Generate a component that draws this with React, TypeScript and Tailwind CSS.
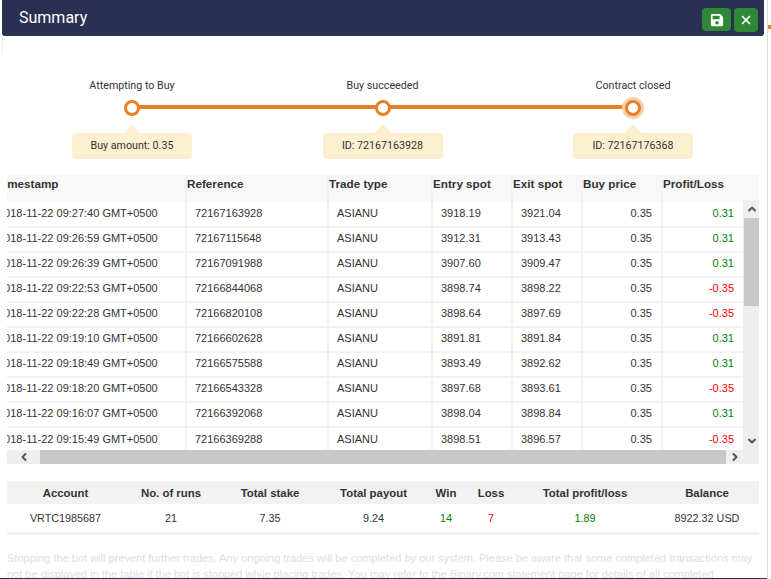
import { FaSave } from "react-icons/fa";
import { X, ChevronUp, ChevronDown, ChevronLeft, ChevronRight } from "lucide-react";

const rows = [
  ["2018-11-22 09:27:40 GMT+0500", "72167163928", "3918.19", "3921.04", "0.31"],
  ["2018-11-22 09:26:59 GMT+0500", "72167115648", "3912.31", "3913.43", "0.31"],
  ["2018-11-22 09:26:39 GMT+0500", "72167091988", "3907.60", "3909.47", "0.31"],
  ["2018-11-22 09:22:53 GMT+0500", "72166844068", "3898.74", "3898.22", "-0.35"],
  ["2018-11-22 09:22:28 GMT+0500", "72166820108", "3898.64", "3897.69", "-0.35"],
  ["2018-11-22 09:19:10 GMT+0500", "72166602628", "3891.81", "3891.84", "0.31"],
  ["2018-11-22 09:18:49 GMT+0500", "72166575588", "3893.49", "3892.62", "0.31"],
  ["2018-11-22 09:18:20 GMT+0500", "72166543328", "3897.68", "3893.61", "-0.35"],
  ["2018-11-22 09:16:07 GMT+0500", "72166392068", "3898.04", "3898.84", "0.31"],
  ["2018-11-22 09:15:49 GMT+0500", "72166369288", "3898.51", "3896.57", "-0.35"],
];

const steps = [
  { title: "Attempting to Buy", info: "Buy amount: 0.35" },
  { title: "Buy succeeded", info: "ID: 72167163928" },
  { title: "Contract closed", info: "ID: 72167176368", active: true },
];

function Step({ title, info, active }: { title: string; info: string; active?: boolean }) {
  return (
    <div className="flex w-[120px] flex-col items-center">
      <div className="h-[15px] text-[10.7px] leading-[15px] text-[#333]">{title}</div>
      <div className={`mt-[7px] box-content h-[10px] w-[10px] rounded-full border-[3px] border-[#e98024] bg-white ${active ? "shadow-[0_0_0_3px_#f5cfae]" : ""}`} />
      <div className="mt-[8px] h-0 w-0 border-x-[8px] border-b-[9px] border-x-transparent border-b-[#fdf0d0]" />
      <div className="flex h-[26px] w-[120px] items-center justify-center rounded-[4px] bg-[#fdf0d0] text-[10.7px] text-[#333]">{info}</div>
    </div>
  );
}

export default function App() {
  return (
    <div className="relative h-[579px] w-[771px] overflow-hidden bg-white font-['Liberation_Sans',sans-serif]">
      <div className="absolute top-[25px] right-0 h-[4px] w-[3px] bg-[#e98024]" />
      <div className="absolute top-0 right-[3px] h-full w-px bg-[#ddd]" />
      <div className="absolute top-[36px] left-[2px] h-[18px] w-px bg-[#eee]" />
      <div className="absolute right-[4px] bottom-0 left-0 h-px bg-[#2a3052]" />
      <div className="ml-[2px] w-[762px]">
        <div className="flex h-[36px] justify-between rounded-b-[3px] bg-[#2a3052] pr-[6px] pl-[17px]">
          <span className="font-['Roboto',sans-serif] text-[16px] leading-[35px] text-white">Summary</span>
          <div className="mt-[8px] flex items-start gap-[3px]">
            <button className="flex h-[23px] w-[29px] items-center justify-center rounded-[4px] bg-[#2e8836] text-white">
              <FaSave size={14} />
            </button>
            <button className="flex h-[24px] w-[24px] items-center justify-center rounded-[4px] bg-[#2e8836] text-white">
              <X size={14} strokeWidth={3} />
            </button>
          </div>
        </div>

        <div className="font-['Roboto',sans-serif]">
          <div className="relative mt-[42px] ml-[70px] flex w-[621px] justify-between">
            <div className="absolute top-[27px] right-[60px] left-[60px] h-[4px] bg-[#e98024]" />
            {steps.map((s) => (
              <div key={s.title} className="relative">
                <Step {...s} />
              </div>
            ))}
          </div>
        </div>

        <div className="mt-[16px] ml-[5px] w-[752px]">
          <div className="flex">
            <div className="w-[736px]">
              <div className="h-[275px] overflow-hidden">
                <table className="ml-[-12px] w-[748px] table-fixed border-collapse text-[11px] text-[#333]">
                  <colgroup>
                    <col className="w-[191px]" />
                    <col className="w-[142px]" />
                    <col className="w-[104px]" />
                    <col className="w-[80px]" />
                    <col className="w-[70px]" />
                    <col className="w-[80px]" />
                    <col className="w-[81px]" />
                  </colgroup>
                  <thead>
                    <tr className="h-[24px] bg-[#f8f8f8] text-left text-[11.7px] font-bold">
                      <th className="border-r-2 border-[#f2f2f2] pb-[9px] pl-[2px] font-bold">Timestamp</th>
                      <th className="border-r-2 border-[#f2f2f2] pb-[9px] font-bold">Reference</th>
                      <th className="border-r-2 border-[#f2f2f2] pb-[9px] font-bold">Trade type</th>
                      <th className="border-r-2 border-[#f2f2f2] pb-[9px] font-bold">Entry spot</th>
                      <th className="border-r-2 border-[#f2f2f2] pb-[9px] font-bold">Exit spot</th>
                      <th className="border-r-2 border-[#f2f2f2] pb-[9px] font-bold">Buy price</th>
                      <th className="pb-[9px] font-bold">Profit/Loss</th>
                    </tr>
                  </thead>
                  <tbody>
                    {rows.map((r) => (
                      <tr key={r[1]} className="h-[25px] border-b-2 border-[#f2f2f2] last:border-b-0">
                        <td className="border-r-2 border-[#f2f2f2] pb-[1px] pl-[3px] whitespace-nowrap">{r[0]}</td>
                        <td className="border-r-2 border-[#f2f2f2] pb-[1px] pl-[8px]">{r[1]}</td>
                        <td className="border-r-2 border-[#f2f2f2] pb-[1px] pl-[8px]">ASIANU</td>
                        <td className="border-r-2 border-[#f2f2f2] pb-[1px] pl-[8px]">{r[2]}</td>
                        <td className="border-r-2 border-[#f2f2f2] pb-[1px] pl-[8px]">{r[3]}</td>
                        <td className="border-r-2 border-[#f2f2f2] pr-[9px] pb-[1px] text-right">0.35</td>
                        <td className={`pr-[9px] pb-[1px] text-right ${r[4].startsWith("-") ? "text-[#ff0000]" : "text-[#008000]"}`}>{r[4]}</td>
                      </tr>
                    ))}
                  </tbody>
                </table>
              </div>
              <div className="flex h-[14px] bg-[#eeeeee] text-[#555]">
                <div className="flex w-[33px] items-center justify-center"><ChevronLeft size={12} strokeWidth={4} /></div>
                <div className="w-[686px] bg-[#c8c8c8]" />
                <div className="flex flex-1 items-center justify-center"><ChevronRight size={12} strokeWidth={4} /></div>
              </div>
            </div>
            <div className="flex w-[16px] flex-col">
              <div className="h-[25px] bg-[#f8f8f8]" />
              <div className="flex flex-1 flex-col bg-[#eeeeee] pl-[1px] pb-[14px]">
                <div className="flex h-[18px] items-center justify-center text-[#555]"><ChevronUp size={12} strokeWidth={4} /></div>
                <div className="h-[88px] bg-[#c8c8c8]" />
                <div className="flex-1" />
                <div className="flex h-[18px] items-center justify-center text-[#555]"><ChevronDown size={12} strokeWidth={4} /></div>
              </div>
            </div>
          </div>

          <div className="mt-[17px] w-[752px] border-b-[3px] border-[#f2f2f2] text-center text-[10.8px] text-[#333]">
            <div className="grid h-[23px] grid-cols-[117px_94px_104px_103px_42px_48px_140px_104px] items-center bg-[#f2f2f2] pt-[2px] text-[11.4px] font-bold">
              <div>Account</div><div>No. of runs</div><div>Total stake</div><div>Total payout</div><div>Win</div><div>Loss</div><div>Total profit/loss</div><div>Balance</div>
            </div>
            <div className="grid h-[28px] grid-cols-[117px_94px_104px_103px_42px_48px_140px_104px] items-center">
              <div>VRTC1985687</div><div>21</div><div>7.35</div><div>9.24</div>
              <div className="text-[#008000]">14</div><div className="text-[#ff0000]">7</div><div className="text-[#008000]">1.89</div><div>8922.32 USD</div>
            </div>
          </div>

          <p className="mt-[15px] w-[752px] text-[11px] leading-[16px] text-[#dedede]">
            Stopping the bot will prevent further trades. Any ongoing trades will be completed by our system. Please be aware that some completed transactions may not be displayed in the table if the bot is stopped while placing trades. You may refer to the Binary.com statement page for details of all completed transactions.
          </p>
        </div>
      </div>
    </div>
  );
}
